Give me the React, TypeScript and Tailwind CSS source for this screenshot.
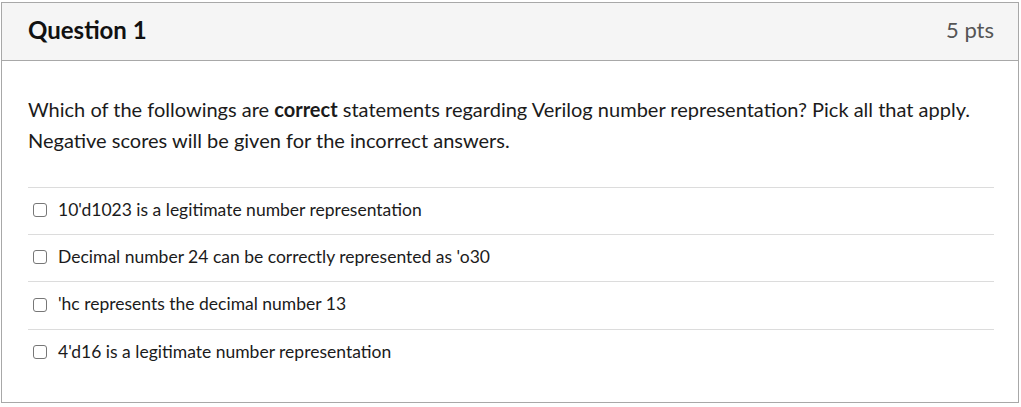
import React from "react";

const answers = [
  "10'd1023 is a legitimate number representation",
  "Decimal number 24 can be correctly represented as 'o30",
  "'hc represents the decimal number 13",
  "4'd16 is a legitimate number representation",
];

export default function App() {
  return (
    <div className="w-[1021px] h-[407px] bg-white pt-[2px] pl-[1px]" style={{ fontFamily: "Lato, 'Open Sans', sans-serif" }}>
      <div className="w-[1018px] h-[401px] border border-[#a8a8a8] flex flex-col">
        <div className="h-[58px] bg-[#f5f5f5] border-b border-[#a8a8a8] flex items-center justify-between pl-[26px] pr-[24px] pb-[4px] shrink-0">
          <span className="text-[24px] font-bold text-[#111]">Question 1</span>
          <span className="text-[22px] text-[#555]">5 pts</span>
        </div>
        <div className="pl-[26px] pr-[24px] pt-[33px]">
          <p className="text-[20px] leading-[31px] text-[#1b1b1b]">
            Which of the followings are <b className="font-bold">correct</b> statements regarding Verilog number representation? Pick all that apply.
            <br />
            Negative scores will be given for the incorrect answers.
          </p>
          <div className="mt-[31px]">
            {answers.map((a, i) => (
              <div key={a} className={`${i === 0 ? "h-[47px]" : "h-[47.4px]"} border-t border-[#dcdcdc] flex items-center pl-[5px] pb-[2px]`}>
                <span className="w-[14px] h-[14px] border border-[#777] rounded-[3px] bg-white mr-[11px] shrink-0" />
                <span className="text-[17.5px] text-[#1b1b1b]">{a}</span>
              </div>
            ))}
          </div>
        </div>
      </div>
    </div>
  );
}
